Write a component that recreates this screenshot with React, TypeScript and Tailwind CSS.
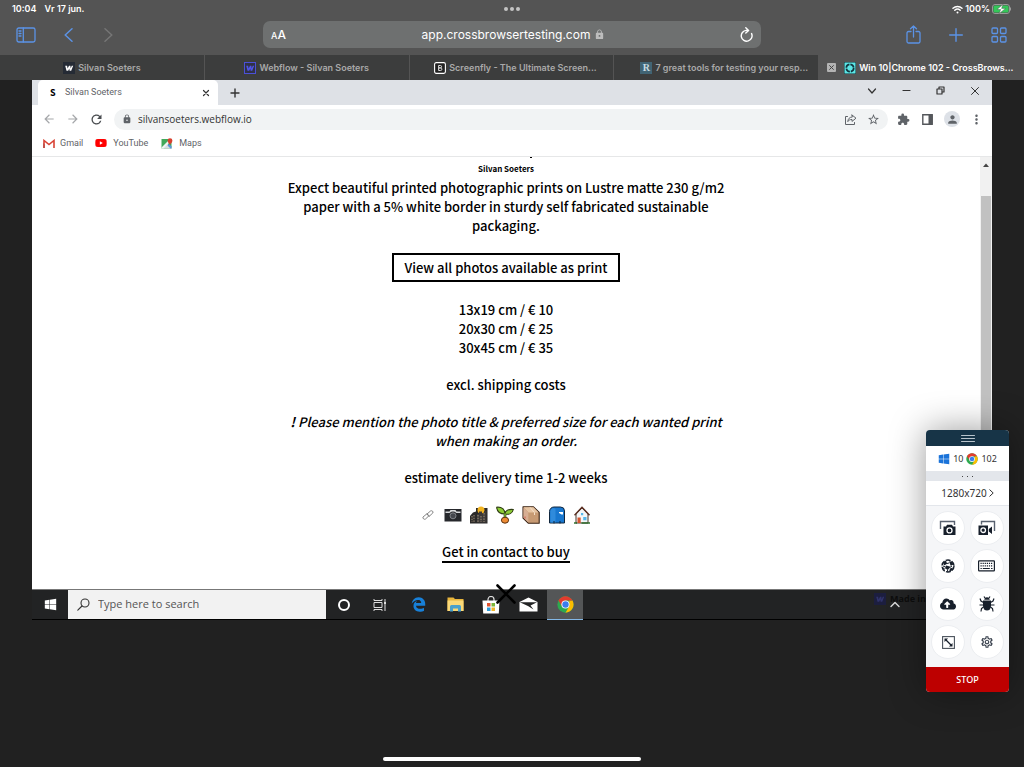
import type { ReactNode } from "react";
import {
  MdArrowBack,
  MdArrowForward,
  MdRefresh,
  MdLock,
  MdStarBorder,
  MdExtension,
  MdPerson,
  MdMoreVert,
  MdOutlineSettings,
} from "react-icons/md";
import { FaWindows, FaEdgeLegacy, FaCloudUploadAlt, FaYoutube } from "react-icons/fa";

const blue = "#5b93e6";

function Stroke({
  size = 16,
  w,
  h,
  color = "currentColor",
  width = 1.2,
  children,
}: {
  size?: number;
  w?: number;
  h?: number;
  color?: string;
  width?: number;
  children: ReactNode;
}) {
  return (
    <svg
      width={w ?? size}
      height={h ?? size}
      viewBox={`0 0 ${w ?? size} ${h ?? size}`}
      fill="none"
      stroke={color}
      strokeWidth={width}
      strokeLinecap="round"
      strokeLinejoin="round"
      className="block shrink-0"
      aria-hidden="true"
    >
      {children}
    </svg>
  );
}

function ChromeLogo({ size }: { size: number }) {
  return (
    <svg width={size} height={size} viewBox="0 0 48 48" className="block shrink-0" aria-hidden="true">
      <circle cx="24" cy="24" r="23" fill="#2da94f" />
      <path d="M24 47 34.5 29V13H43.9A23 23 0 0 1 24 47Z" fill="#fdbd00" />
      <path d="M4.1 12.5A23 23 0 0 1 43.9 12.5H24L13.5 28.5Z" fill="#e33b2e" />
      <circle cx="24" cy="24" r="11.5" fill="#fff" />
      <circle cx="24" cy="24" r="9" fill="#3b7ded" />
    </svg>
  );
}

function WebflowMark({ bg, fg, border }: { bg: string; fg: string; border: string }) {
  return (
    <svg width="12" height="12" viewBox="0 0 12 12" className="block shrink-0" aria-hidden="true">
      <rect x="0.5" y="0.5" width="11" height="11" fill={bg} stroke={border} />
      <path d="M2.2 3.7h1.9l.5 2.8L6 3.7h1.4l.3 2.8L8.7 3.7h1.5L8.2 8.7H6.6L6.3 6.5 5.2 8.7H3.5Z" fill={fg} />
    </svg>
  );
}

function ScreenflyMark() {
  return (
    <svg width="12" height="12" viewBox="0 0 12 12" className="block shrink-0" aria-hidden="true">
      <rect x="0.6" y="0.6" width="10.8" height="10.8" rx="1.6" fill="#222" stroke="#fff" strokeWidth="1.1" />
      <path d="M4.6 3.5h1.8a1.2 1.2 0 0 1 0 2.4H4.6Zm0 2.4h2a1.3 1.3 0 0 1 0 2.6h-2Z" fill="none" stroke="#ddd" strokeWidth="1" />
    </svg>
  );
}

function RMark() {
  return (
    <span className="flex size-3 shrink-0 items-center justify-center bg-[#416474] font-['Liberation_Serif',serif] text-[10px] leading-none font-bold text-[#c9dbe0]">
      R
    </span>
  );
}

function CbtMark() {
  return (
    <svg width="12" height="12" viewBox="0 0 12 12" className="block shrink-0" aria-hidden="true">
      <rect width="12" height="12" fill="#152a30" />
      <rect x="0.5" y="0.5" width="11" height="11" fill="#5ce6e6" />
      <circle cx="6" cy="6" r="3.7" fill="none" stroke="#12343d" strokeWidth="1.7" strokeDasharray="4.8 1" />
    </svg>
  );
}

const safariTabs = [
  { title: "Silvan Soeters", pad: "", icon: <WebflowMark bg="#252b35" fg="#fff" border="#252b35" /> },
  { title: "Webflow - Silvan Soeters", pad: "", icon: <WebflowMark bg="#303248" fg="#5055e8" border="#4b50d8" /> },
  { title: "Screenfly - The Ultimate Screen...", pad: "pl-2", icon: <ScreenflyMark /> },
  { title: "7 great tools for testing your resp...", pad: "pl-4", icon: <RMark /> },
];

function SafariBar() {
  return (
    <header className="bg-[#545454] font-[Inter,sans-serif] text-white">
      <div className="grid h-[18px] grid-cols-3 items-center pr-3 pl-3 text-[9px] leading-[18px] font-semibold">
        <div className="flex gap-2">
          <span>10:04</span>
          <span>Vr 17 jun.</span>
        </div>
        <div className="flex justify-center gap-[2px]">
          <i className="size-1 rounded-full bg-[#c4c4c4]" />
          <i className="size-1 rounded-full bg-[#c4c4c4]" />
          <i className="size-1 rounded-full bg-[#c4c4c4]" />
        </div>
        <div className="flex items-center justify-end gap-[2px] pl-2">
          <Stroke w={11} h={9} width={1.5}>
            <path d="M1 3.3a6.6 6.6 0 0 1 9 0M2.8 5.3a4 4 0 0 1 5.4 0" />
            <path d="M5.5 7.4v.1" strokeWidth="2" />
          </Stroke>
          <span>100%</span>
          <svg width="20" height="10" viewBox="0 0 20 10" aria-hidden="true">
            <rect x="0.5" y="0.5" width="17" height="9" rx="2.5" fill="none" stroke="#9a9a9a" />
            <rect x="1.5" y="1.5" width="15" height="7" rx="1.5" fill="#34c759" />
            <path d="M18.5 3.5v3" stroke="#9a9a9a" />
            <path d="M11 .3 5 5.5H8.7L7 9.7 13.5 4.4H9.6Z" fill="#fff" stroke="#444" strokeWidth="0.4" />
          </svg>
        </div>
      </div>

      <div className="grid grid-cols-[1fr_498px_1fr] items-center pt-[3px] pb-[7px]">
        <nav className="flex items-center gap-7 pl-4">
          <button aria-label="Sidebar">
            <Stroke w={20} h={16} color={blue} width={1.3}>
              <rect x="1" y="1" width="18" height="14" rx="1.8" />
              <path d="M7.3 1v14M3 4h2M3 6.5h2M3 9h2" />
            </Stroke>
          </button>
          <button aria-label="Back">
            <Stroke w={9} h={14} color={blue} width={1.5}>
              <path d="M8 .8 1.2 7 8 13.2" />
            </Stroke>
          </button>
          <button aria-label="Forward" className="ml-[3px]">
            <Stroke w={9} h={14} color="#767676" width={1.5}>
              <path d="m1 .8 6.8 6.2L1 13.2" />
            </Stroke>
          </button>
        </nav>
        <div className="flex h-[27px] items-center rounded-[7px] bg-[#6e7070] px-2">
          <button aria-label="Page settings" className="flex w-4 items-baseline font-medium">
            <span className="text-[9px]">A</span>
            <span className="text-[12px]">A</span>
          </button>
          <button className="flex flex-1 items-center justify-center gap-1 text-[12px]">
            app.crossbrowsertesting.com
            <MdLock size={11} color="#bdbdbd" />
          </button>
          <button aria-label="Reload">
            <Stroke w={13} h={15} width={1.4}>
              <path d="M11.6 6.6A5.4 5.4 0 1 1 6.3 3.4h2M5.8.8l2.8 2.6L5.8 6" />
            </Stroke>
          </button>
        </div>
        <nav className="flex items-center justify-end gap-[28px] pr-[17px]">
          <button aria-label="Share">
            <Stroke w={15} h={19} color={blue} width={1.3}>
              <path d="M5 6.5H2.5A1.5 1.5 0 0 0 1 8v8.5A1.5 1.5 0 0 0 2.5 18h10a1.5 1.5 0 0 0 1.5-1.5V8a1.5 1.5 0 0 0-1.5-1.5H10M7.5 12V1M4.5 3.8 7.5 1l3 2.8" />
            </Stroke>
          </button>
          <button aria-label="New tab">
            <Stroke size={14} color={blue} width={1.4}>
              <path d="M7 .7v12.6M.7 7h12.6" />
            </Stroke>
          </button>
          <button aria-label="All tabs">
            <Stroke size={16} color={blue} width={1.3}>
              <rect x="1" y="1" width="5.5" height="5.5" rx="1" />
              <rect x="9.5" y="1" width="5.5" height="5.5" rx="1" />
              <rect x="1" y="9.5" width="5.5" height="5.5" rx="1" />
              <rect x="9.5" y="9.5" width="5.5" height="5.5" rx="1" />
            </Stroke>
          </button>
        </nav>
      </div>

      <div className="grid h-[25px] grid-cols-5 text-[9px] font-semibold">
        {safariTabs.map((t) => (
          <button
            key={t.title}
            className={`flex items-center justify-center gap-[3px] border-r border-[#545454] bg-[#3c3d3d] whitespace-nowrap text-[#a9a9a9] ${t.pad}`}
          >
            {t.icon}
            {t.title}
          </button>
        ))}
        <div className="flex items-center gap-2 pl-2">
          <button aria-label="Close tab" className="flex size-[9px] items-center justify-center rounded-[1px] bg-[#b3b3b3]">
            <Stroke size={5} color="#444" width={1}>
              <path d="m.6.6 3.8 3.8M4.4.6.6 4.4" />
            </Stroke>
          </button>
          <button className="flex items-center gap-[3px] whitespace-nowrap">
            <CbtMark />
            Win 10|Chrome 102 - CrossBrows...
          </button>
        </div>
      </div>
    </header>
  );
}

function ChromeWindow() {
  return (
    <div className="bg-white font-['Open_Sans',sans-serif]">
      <div className="flex h-[25px] bg-[#dee1e6] pl-[6px]">
        <div className="flex w-[180px] items-center rounded-t-[5px] bg-white pr-2 pl-3 font-[Roboto,sans-serif] text-[9px] text-[#5f6368]">
          <b className="w-[15px] font-['Noto_Sans_CJK_SC',sans-serif] text-[9px] font-bold text-black">S</b>
          <span className="flex-1">Silvan Soeters</span>
          <button aria-label="Close">
            <Stroke size={8} color="#333" width={1.2}>
              <path d="m1.5 1.5 5 5M6.5 1.5l-5 5" />
            </Stroke>
          </button>
        </div>
        <button aria-label="New tab" className="ml-3">
          <Stroke size={10} color="#333" width={1.4}>
            <path d="M5 1v8M1 5h8" />
          </Stroke>
        </button>
        <div className="mb-1 ml-auto flex items-center gap-[25px] pr-3 text-[#333]">
          <button aria-label="Search tabs">
            <Stroke size={10}>
              <path d="m1.5 3 3.5 4 3.5-4" />
            </Stroke>
          </button>
          <button aria-label="Minimize">
            <Stroke size={9}>
              <path d="M1 4.5h7" />
            </Stroke>
          </button>
          <button aria-label="Restore">
            <Stroke size={9}>
              <path d="M1 3h5v5H1ZM3 3V1h5v5H6" />
            </Stroke>
          </button>
          <button aria-label="Close window">
            <Stroke size={10} width={1}>
              <path d="m1.5 1.5 7 7M8.5 1.5l-7 7" />
            </Stroke>
          </button>
        </div>
      </div>

      <div className="flex h-[28px] items-center pr-2 pl-[10px] text-[#5f6368]">
        <button aria-label="Back" className="mr-[10px] text-[#a5a7aa]">
          <MdArrowBack size={14} />
        </button>
        <button aria-label="Forward" className="mr-[9px] text-[#a5a7aa]">
          <MdArrowForward size={14} />
        </button>
        <button aria-label="Reload" className="mr-[10px] text-[#4a4d51]">
          <MdRefresh size={15} />
        </button>
        <div className="flex h-[21px] flex-1 items-center gap-[6px] rounded-full bg-[#f1f3f4] pr-2 pl-2">
          <MdLock size={10} />
          <input
            aria-label="Address"
            defaultValue="silvansoeters.webflow.io"
            className="min-w-0 flex-1 bg-transparent text-[10px] text-[#333] outline-none"
          />
          <button aria-label="Share page" className="mr-1">
            <Stroke size={13} width={1}>
              <path d="M3.5 3.5H1.5v8h9V9.5M8 2l4 3.2L8 8.4V6.5C6 6.5 4.8 7 3.8 8.6 4 5.8 5.5 4.2 8 4Z" />
            </Stroke>
          </button>
          <button aria-label="Bookmark">
            <MdStarBorder size={13} />
          </button>
        </div>
        <button aria-label="Extensions" className="ml-[9px]">
          <MdExtension size={13} />
        </button>
        <button aria-label="Side panel" className="ml-3">
          <svg width="11" height="11" viewBox="0 0 11 11" aria-hidden="true">
            <path d="M.8.8h9.4v9.4H.8Z" fill="none" stroke="#54575b" strokeWidth="1.4" />
            <path d="M6.5 1h4v9h-4Z" fill="#54575b" />
          </svg>
        </button>
        <button aria-label="Profile" className="ml-[11px] flex size-4 items-center justify-center rounded-full bg-[#dde1e7]">
          <MdPerson size={13} />
        </button>
        <button aria-label="Menu" className="ml-[9px]">
          <MdMoreVert size={15} />
        </button>
      </div>

      <div className="flex h-6 items-start border-b border-[#e6e7e8] pl-[11px] font-[Roboto,sans-serif] text-[9px] leading-5 text-[#5f6368]">
        <a href="#gmail" className="flex items-center gap-[5px]">
          <svg width="12" height="9" viewBox="0 0 12 9" aria-hidden="true">
            <path d="M1 9V1.5L6 5.5l5-4V9" fill="none" stroke="#d94436" strokeWidth="1.6" />
            <path d="M.1 4v5h1.8V5.5Z" fill="#c0504a" />
          </svg>
          Gmail
        </a>
        <a href="#youtube" className="ml-3 flex items-center gap-[6px]">
          <FaYoutube size={12} color="#f00" />
          YouTube
        </a>
        <a href="#maps" className="ml-[13px] flex items-center gap-[6px]">
          <svg width="12" height="11" viewBox="0 0 12 11" aria-hidden="true">
            <path d="M.5 1h10v9.5H.5Z" fill="#41a85a" />
            <path d="M1 10.5 6 5.5l5 5Z" fill="#d7dde3" />
            <path d="M.5 9.5 9 1l1.5 1.5-8 8H.5Z" fill="#f1f3f4" />
            <path d="m6.5 7.5 1.5-1.500 2.500 2.500v2h-1Z" fill="#5a92dc" />
            <path d="M6.600 2.600a2.400 2.400 0 0 1 4.800 0C11.400 4.500 9 6.800 9 6.800S6.600 4.500 6.600 2.600Z" fill="#d8402f" />
          </svg>
          Maps
        </a>
      </div>
    </div>
  );
}

const emoji = "block size-[18px]";

function EmojiRow() {
  return (
    <div className="flex h-[19px] items-center justify-center gap-2 pr-[3px]">
      <svg viewBox="0 0 18 18" className={emoji} aria-label="link">
        <g fill="none" stroke="#777" strokeWidth="0.9">
          <path d="m5 11 4-3.300 2 2L7.500 13c-1.300 1-3.200-.8-2.500-2Z" />
          <path d="m9 8 3.500-3c1.500-.9 3.200.7 2.300 2L11 10.500l-2-2.500Z" />
        </g>
      </svg>
      <svg viewBox="0 0 18 18" className={emoji} aria-label="camera">
        <path d="M.5 3h17v12.500H.5Z" fill="#26282c" />
        <path d="M1.500 5.500h4l1-1.500h5l1 1.500h4V7h-15Z" fill="#d9dbdd" />
        <circle cx="9" cy="9.800" r="4.400" fill="#26282c" />
        <circle cx="9" cy="9.800" r="3" fill="#44474d" stroke="#909499" strokeWidth="0.800" />
      </svg>
      <svg viewBox="0 0 18 18" className={emoji} aria-label="buildings">
        <path d="M0 17.500V10l3-3.500 3-1V2h11.500v15.500Z" fill="#2b2928" />
        <circle cx="11" cy="4" r="3.500" fill="#f2b422" />
        <path d="M7 8h2V5.500h3V8h2V5h2.500v11.500H7Z" fill="#3c3937" />
        <path d="M2 10v6M4 9v7M8 9v7M11 10v6M14 7v9" stroke="#a6957f" strokeWidth="1" strokeDasharray="1.500 1.200" />
      </svg>
      <svg viewBox="0 0 18 18" className={emoji} aria-label="seedling">
        <path d="M9 14V7.500" stroke="#2c3a14" strokeWidth="2.600" />
        <path d="M9 8C5.500 8 1 6.500.7 1.200 6 .8 8.800 3 9 8Zm0 0c0-3.500 3.500-5 8.300-4.500C16.500 7.500 13 9 9 8Z" fill="#8ccc35" stroke="#2f3d12" strokeWidth="1.100" />
        <path d="M9 13V7.500" stroke="#8ccc35" strokeWidth="1.300" />
        <ellipse cx="9" cy="14.200" rx="3.600" ry="3" fill="#ed8b35" stroke="#59300f" strokeWidth="1" />
      </svg>
      <svg viewBox="0 0 18 18" className={emoji} aria-label="package">
        <path d="M1 .8h10.500l5.700 5.700v10.700H6.200L1 12Z" fill="#c79a73" stroke="#3a2416" strokeWidth="1.100" strokeLinejoin="round" />
        <path d="M1.500 1.300h10l5.200 5.200H6.500Z" fill="#e6c4a2" />
        <path d="M1.500 1.500 6.300 6.500v10L1.500 11.700Z" fill="#d7ae93" />
        <path d="M8 1.300 12.500 6.500v2.500" stroke="#f4dfc8" fill="none" />
        <path d="M3 10.500v2" stroke="#cf554d" />
      </svg>
      <svg viewBox="0 0 18 18" className={emoji} aria-label="mailbox">
        <path d="M1.500 17V5.500A4.500 4.500 0 0 1 6 1h6.500a4 4 0 0 1 4 4v12Z" fill="#1877cf" stroke="#10263d" strokeWidth="1" />
        <path d="M2.500 16.500V5.500a3 3 0 0 1 5-2.500v13.500Z" fill="#2f8bdc" />
        <path d="M11 6h4v2.500h-1.500L11 7Z" fill="#fff" />
        <path d="M6 15v2.500M12 15v2.500" stroke="#0d2339" />
      </svg>
      <svg viewBox="0 0 18 18" className={emoji} aria-label="house">
        <path d="M2 8 8 2l6 6v9H2Z" fill="#f4f6f7" stroke="#46362d" strokeWidth="1" />
        <path d="M.5 9.200 8 1.300l7.500 7.900" fill="none" stroke="#5a2f22" strokeWidth="1.500" />
        <path d="M3.500 11.500h3.200V17H3.500Z" fill="#d6552f" />
        <path d="M9.200 11h3.300v3.200H9.200ZM7 7h2.200v2.200H7Z" fill="#58b7ea" />
        <path d="M0 17h3M7.500 17h8.500" stroke="#2f6e2c" strokeWidth="1.500" />
      </svg>
    </div>
  );
}

function WebPage() {
  return (
    <div className="flex h-[432px] overflow-hidden bg-white">
      <main className="relative flex flex-1 flex-col items-center pt-[6px] text-center font-['Noto_Sans_CJK_SC',sans-serif] text-[13px] leading-[19px] font-medium text-black">
        <i className="absolute top-0 right-1/2 -mr-[26px] h-px w-[2px] bg-black" />
        <h1 className="mb-[3px] text-[8px] leading-3 font-bold">Silvan Soeters</h1>
        <p>
          Expect beautiful printed photographic prints on Lustre matte 230 g/m2
          <br />
          paper with a 5% white border in sturdy self fabricated sustainable
          <br />
          packaging.
        </p>
        <a href="#prints" className="mt-[18px] border-2 border-black px-[10px] py-[3px]">
          View all photos available as print
        </a>
        <p className="mt-[18px]">
          13x19 cm / € 10
          <br />
          20x30 cm / € 25
          <br />
          30x45 cm / € 35
        </p>
        <p className="mt-[18px]">excl. shipping costs</p>
        <p className="mt-[18px] italic">
          <b>!</b> Please mention the photo title &amp; preferred size for each wanted print
          <br />
          when making an order.
        </p>
        <p className="mt-[18px] mb-[18px]">estimate delivery time 1-2 weeks</p>
        <EmojiRow />
        <a href="#contact" className="mt-[18px] border-b-2 border-black">
          Get in contact to buy
        </a>
      </main>
      <div className="flex w-3 flex-col bg-[#f1f1f1]">
        <div className="flex h-[39px] justify-center pt-[6px]">
          <svg width="6" height="4" viewBox="0 0 6 4" aria-hidden="true">
            <path d="m0 4 3-3.500L6 4Z" fill="#444" />
          </svg>
        </div>
        <div className="mx-px flex-1 bg-[#c1c1c1]" />
      </div>
    </div>
  );
}

function Taskbar() {
  return (
    <div className="relative flex h-[31px] items-stretch border-t border-b border-t-[#777] border-b-black bg-[#222324] font-['Open_Sans',sans-serif]">
      <button aria-label="Start" className="flex w-9 items-center justify-center text-white">
        <FaWindows size={13} />
      </button>
      <label className="flex w-[258px] items-center gap-2 bg-[#f2f2f2] pl-[9px]">
        <Stroke size={13} color="#333" width={1.1}>
          <circle cx="8" cy="5" r="4" />
          <path d="M5 8 .8 12.200" />
        </Stroke>
        <input
          aria-label="Search"
          placeholder="Type here to search"
          className="w-full bg-transparent text-[11px] text-[#444] outline-none placeholder:text-[#555]"
        />
      </label>
      <button aria-label="Cortana" className="flex w-9 items-center justify-center">
        <i className="size-3 rounded-full border-2 border-white" />
      </button>
      <button aria-label="Task view" className="flex w-9 items-center justify-center">
        <svg width="14" height="12" viewBox="0 0 14 12" fill="none" stroke="#ddd" aria-hidden="true">
          <path d="M1 3.500h8v5H1ZM1 0v1.500h8V0M1 12v-1.500h8V12M12 0v12" />
          <path d="M11 4h2" strokeWidth="2" />
        </svg>
      </button>
      <button aria-label="Edge" className="flex w-10 items-center justify-center text-[#1880d8]">
        <FaEdgeLegacy size={15} />
      </button>
      <button aria-label="File Explorer" className="flex w-[34px] items-center justify-center">
        <svg width="17" height="15" viewBox="0 0 17 15" aria-hidden="true">
          <path d="M.5.500h6L8 2h8.500v12H.5Z" fill="#e8b53c" />
          <path d="M.5 3.500h16V14H.5Z" fill="#fbd978" />
          <path d="M3 14.500V9.500Q3 8 4.500 8h8Q14 8 14 9.500v5h-3V11.500H6v3Z" fill="#4ba0ca" />
        </svg>
      </button>
      <button aria-label="Store" className="flex w-[38px] items-center justify-center">
        <svg width="18" height="18" viewBox="0 0 18 18" aria-hidden="true">
          <path d="M6 6V3.500a3 3 0 0 1 6 0V6" fill="none" stroke="#ddd" strokeWidth="1.200" />
          <path d="M.5 4.500h17L16.800 17.500H1.200Z" fill="#fff" />
          <path d="M5 7h3.500v3.500H5Z" fill="#e0532f" />
          <path d="M9.500 7H13v3.500H9.500Z" fill="#7db63a" />
          <path d="M5 11.500h3.500V15H5Z" fill="#2b9bd8" />
          <path d="M9.500 11.500H13V15H9.500Z" fill="#efb52b" />
        </svg>
      </button>
      <button aria-label="Mail" className="flex w-[37px] items-center justify-center">
        <svg width="19" height="15" viewBox="0 0 19 15" aria-hidden="true">
          <path d="M.5 5 9.500.5l9 4.500v9.500H.5Z" fill="#fff" />
          <path d="m.8 5.200 17.200 0-6.500 3.300 3 4-5.500-3.500Z" fill="#222324" />
        </svg>
      </button>
      <button aria-label="Chrome" className="-mb-px flex w-9 items-center justify-center border-b border-[#84b9e8] bg-[#545657]">
        <ChromeLogo size={17} />
      </button>
      <div className="absolute top-0 right-[66px] flex h-[18px] items-center gap-1 text-[9px] font-bold whitespace-nowrap text-[#0d0d0d]">
        <WebflowMark bg="#1c1e3f" fg="#30336b" border="#1c1e3f" />
        Made in
      </div>
      <div className="absolute top-[10px] right-[92px] text-[#ddd]">
        <Stroke w={10} h={8} width={1.4}>
          <path d="m1 6.500 4-4 4 4" />
        </Stroke>
      </div>
      <div className="absolute -top-[6px] left-[464px] text-black">
        <Stroke size={20} width={2.6}>
          <path d="m1.500 1.500 17 17M18.500 1.500l-17 17" />
        </Stroke>
      </div>
    </div>
  );
}

const tools: { label: string; icon: ReactNode }[] = [
  {
    label: "Screenshot",
    icon: (
      <svg width="18" height="16" viewBox="0 0 18 16" aria-hidden="true">
        <path d="M1.500 9V1.500h14V5" fill="none" stroke="#596270" strokeWidth="1.400" />
        <path d="M4.500 6.500H7l1-1.700h5l1 1.700h2.500V15H4.500Z" fill="#171f2b" />
        <circle cx="10.500" cy="10.400" r="2.500" fill="none" stroke="#fff" strokeWidth="1.300" />
      </svg>
    ),
  },
  {
    label: "Record video",
    icon: (
      <svg width="18" height="16" viewBox="0 0 18 16" aria-hidden="true">
        <path d="M3.500 4.500v-3h13V11" fill="none" stroke="#596270" strokeWidth="1.400" />
        <path d="M.5 5.500h9.500V15H.5ZM10.800 9 14 6.500V14l-3.200-2.500Z" fill="#171f2b" />
        <circle cx="5.200" cy="10.200" r="2.300" fill="none" stroke="#fff" strokeWidth="1.300" />
      </svg>
    ),
  },
  {
    label: "Network",
    icon: (
      <svg width="14" height="14" viewBox="0 0 14 14" aria-hidden="true">
        <circle cx="7" cy="7" r="6" fill="none" stroke="#171f2b" strokeWidth="1.400" strokeDasharray="5 1.300" />
        <path d="m2 3.500 3-2 1 3-3 2ZM8 2.500l3 0 1.500 3-2.800 1.300ZM5 6.500l4 1-1.500 3-3.500-1ZM9 9.500l3-1-1 3-3 1.200ZM1 8l2.500 1v2.500Z" fill="#171f2b" />
        <path d="M4 5 8 4M4.500 8 2 7M8 9l3-2M6 9.500 7 13" stroke="#171f2b" />
      </svg>
    ),
  },
  {
    label: "Keyboard",
    icon: (
      <svg width="17" height="12" viewBox="0 0 17 12" fill="none" stroke="#171f2b" aria-hidden="true">
        <rect x="0.600" y="0.900" width="15.800" height="10" rx="0.600" strokeWidth="1.200" />
        <path d="M2.500 3.300h12M2.500 5.800h12" strokeWidth="1.300" strokeDasharray="1.200 0.900" />
        <path d="M2.500 8.500h1.300M4.800 8.500h7M13 8.500h1.500" strokeWidth="1.200" />
      </svg>
    ),
  },
  { label: "Upload", icon: <FaCloudUploadAlt size={16} color="#171f2b" /> },
  {
    label: "Report bug",
    icon: (
      <svg width="16" height="16" viewBox="0 0 16 16" aria-hidden="true">
        <path d="M5.300 3.800a2.700 2.500 0 0 1 5.400 0Z" fill="#171f2b" />
        <path d="M4 4.500h8v5.500a4 4.500 0 0 1-8 0Z" fill="#171f2b" />
        <path d="M6 2 5 .5M10 2l1-1.500M4.500 6.500 2 5 1 2.500M11.500 6.500 14 5l1-2.500M4 9H.5M12 9h3.500M4.500 11 2.500 12.500 2 15.500M11.500 11l2 1.500.500 3" fill="none" stroke="#171f2b" strokeWidth="1.200" />
      </svg>
    ),
  },
  {
    label: "Resize",
    icon: (
      <svg width="13" height="13" viewBox="0 0 13 13" aria-hidden="true">
        <rect x="0.600" y="0.600" width="11.800" height="11.800" fill="none" stroke="#4a515b" strokeWidth="1.100" />
        <path d="m4 4 5 5" stroke="#171f2b" strokeWidth="1.300" />
        <path d="M2.500 2.500h3.600L2.500 6.100ZM10.500 10.500H6.900l3.600-3.600Z" fill="#171f2b" />
      </svg>
    ),
  },
  { label: "Settings", icon: <MdOutlineSettings size={14} color="#39414d" /> },
];

function ControlPanel() {
  return (
    <aside className="absolute top-[430px] right-[15px] w-[83px] overflow-hidden rounded-[4px] bg-[#f5f6f8] font-['Noto_Sans',sans-serif] text-[#333] shadow-[0_0_36px_rgba(0,0,0,0.4)]">
      <button aria-label="Move panel" className="flex h-4 w-full items-center justify-center bg-[#173447]">
        <Stroke w={14} h={8} color="#b9c4cc" width={1}>
          <path d="M.5 1.500h13M.5 4.500h13M.5 7.500h13" />
        </Stroke>
      </button>
      <div className="flex h-[25px] items-center justify-center gap-[3px] bg-white pt-px text-[9px]">
        <FaWindows size={12} color="#1a73d9" />
        <span>10</span>
        <ChromeLogo size={12} />
        <span>102</span>
      </div>
      <div className="flex h-[10px] items-center justify-center gap-[4px] bg-[#e3e6eb]">
        <i className="size-px bg-[#444]" />
        <i className="size-px bg-[#444]" />
        <i className="size-px bg-[#444]" />
      </div>
      <button className="flex h-[25px] w-full items-center justify-center gap-[2px] border-b border-[#e3e6eb] bg-white text-[10px]">
        1280x720
        <Stroke w={5} h={8} width={1}>
          <path d="m.8.800 3.400 3.200L.8 7.200" />
        </Stroke>
      </button>
      <div className="grid grid-cols-2 justify-items-center gap-y-1 px-[3px] pt-[5px] pb-[6px]">
        {tools.map((t) => (
          <button
            key={t.label}
            aria-label={t.label}
            className="flex size-[34px] items-center justify-center rounded-full border border-[#eceef1] bg-white"
          >
            {t.icon}
          </button>
        ))}
      </div>
      <button className="h-[25px] w-full bg-[#bd0000] text-[9px] font-medium text-white">STOP</button>
    </aside>
  );
}

export default function App() {
  return (
    <div className="relative flex min-h-screen flex-col overflow-hidden bg-[#212121]">
      <SafariBar />
      <section className="mx-8">
        <ChromeWindow />
        <WebPage />
        <Taskbar />
      </section>
      <ControlPanel />
      <div className="mx-auto mt-auto mb-[6px] h-1 w-[258px] rounded-full bg-white" />
    </div>
  );
}
